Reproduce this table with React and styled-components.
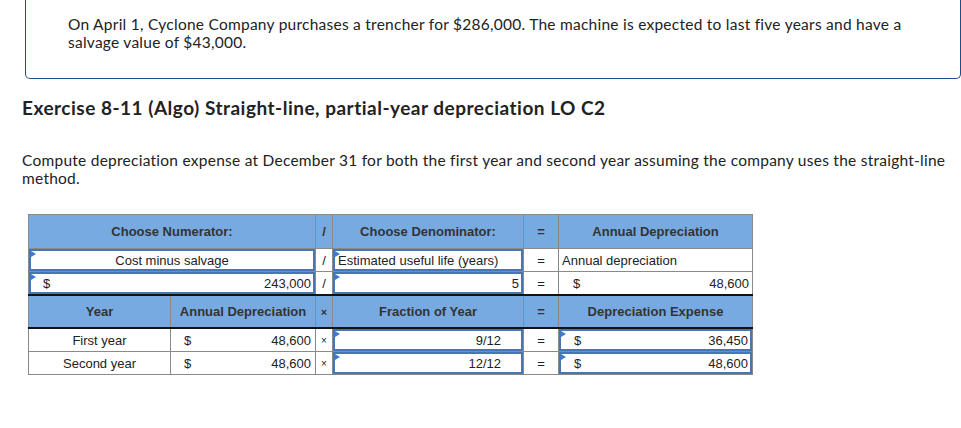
import React from "react";
import styled, { createGlobalStyle } from "styled-components";

const GlobalStyle = createGlobalStyle`
  html, body { margin: 0; padding: 0; background: #fff; overflow: hidden; }
  body { font-family: Lato, "Open Sans", sans-serif; color: #222; }
`;

const Page = styled.div`
  width: 961px;
  height: 428px;
`;

const ProblemBox = styled.div`
  box-sizing: border-box;
  margin-left: 25px;
  width: 936px;
  height: 79px;
  border: 1px solid #1f4d8c;
  border-top: none;
  border-radius: 0 0 5px 5px;
  padding: 15px 30px 0 42px;
  font-size: 15.5px;
  letter-spacing: 0.25px;
  line-height: 18px;
  color: #222;
`;

const Heading = styled.h2`
  margin: 17px 0 0 22px;
  font-size: 19px;
  letter-spacing: 0.5px;
  line-height: 24px;
  font-weight: 700;
  color: #222;
`;

const Prompt = styled.p`
  margin: 31px 0 0 22px;
  width: 930px;
  font-size: 15.5px;
  letter-spacing: 0.25px;
  line-height: 18px;
  color: #222;
`;

const Table = styled.table`
  margin: 27px 0 0 28px;
  border-collapse: collapse;
  table-layout: fixed;
  width: 724px;
  font-family: "Liberation Sans", Arial, sans-serif;
  font-size: 13px;
  color: #222;
`;

const Head = styled.td`
  height: ${(p) => (p.$dark ? "31px" : "33px")};
  padding: 0;
  background: #78aae2;
  border: 1px solid #8a8a8a;
  border-top-color: ${(p) => (p.$dark ? "#111" : "#8a8a8a")};
  border-bottom-color: ${(p) => (p.$dark ? "#111" : "#8a8a8a")};
  border-top-width: ${(p) => (p.$dark ? "2px" : "1px")};
  border-bottom-width: ${(p) => (p.$dark ? "2px" : "1px")};
  text-align: center;
  font-weight: 700;
  color: #333;
  font-size: ${(p) => (p.$small ? "11px" : "13px")};
`;

const Cell = styled.td`
  height: 22px;
  padding: 0 ${(p) => p.$pr || "4px"} 0 ${(p) => p.$pl || "4px"};
  border: 1px solid #8a8a8a;
  text-align: ${(p) => p.$align || "center"};
  white-space: nowrap;
  font-size: ${(p) => (p.$small ? "10px" : "13px")};
`;

const InputCell = styled.td`
  height: 22px;
  padding: 0;
  border: 1px solid #8a8a8a;
`;

const InputBox = styled.div`
  position: relative;
  box-sizing: border-box;
  height: 22px;
  display: flex;
  align-items: center;
  justify-content: ${(p) => p.$justify || "space-between"};
  padding: 0 ${(p) => p.$pr || "3px"} 0 ${(p) => p.$pl || "3px"};
  border: 2px solid #4676b6;
  background: #fff;
  white-space: nowrap;
  &::before {
    content: "";
    position: absolute;
    left: 0;
    top: 0;
    border-left: 5px solid #3b7bd0;
    border-top: 3px solid transparent;
    border-bottom: 3px solid transparent;
  }
`;

const Money = styled.div`
  display: flex;
  justify-content: space-between;
  padding-left: ${(p) => p.$pl || "10px"};
`;

export default function App() {
  return (
    <Page>
      <GlobalStyle />
      <ProblemBox>
        On April 1, Cyclone Company purchases a trencher for $286,000. The machine is expected to last five years and have a
        salvage value of $43,000.
      </ProblemBox>
      <Heading>Exercise 8-11 (Algo) Straight-line, partial-year depreciation LO C2</Heading>
      <Prompt>
        Compute depreciation expense at December 31 for both the first year and second year assuming the company uses the
        straight-line method.
      </Prompt>
      <Table>
        <colgroup>
          <col style={{ width: 142 }} />
          <col style={{ width: 145 }} />
          <col style={{ width: 17 }} />
          <col style={{ width: 191 }} />
          <col style={{ width: 35 }} />
          <col style={{ width: 194 }} />
        </colgroup>
        <tbody>
          <tr>
            <Head colSpan={2}>Choose Numerator:</Head>
            <Head>/</Head>
            <Head>Choose Denominator:</Head>
            <Head>=</Head>
            <Head>Annual Depreciation</Head>
          </tr>
          <tr>
            <InputCell colSpan={2}>
              <InputBox $justify="center">Cost minus salvage</InputBox>
            </InputCell>
            <Cell>/</Cell>
            <InputCell>
              <InputBox $justify="flex-start">Estimated useful life (years)</InputBox>
            </InputCell>
            <Cell>=</Cell>
            <Cell $align="left" $pl="3px">Annual depreciation</Cell>
          </tr>
          <tr>
            <InputCell colSpan={2}>
              <InputBox $pl="12px" $pr="2px">
                <span>$</span>
                <span>243,000</span>
              </InputBox>
            </InputCell>
            <Cell>/</Cell>
            <InputCell>
              <InputBox $justify="flex-end" $pr="2px">5</InputBox>
            </InputCell>
            <Cell>=</Cell>
            <Cell $align="left" $pl="0" $pr="3px">
              <Money $pl="14px">
                <span>$</span>
                <span>48,600</span>
              </Money>
            </Cell>
          </tr>
          <tr>
            <Head $dark>Year</Head>
            <Head $dark>Annual Depreciation</Head>
            <Head $dark $small>×</Head>
            <Head $dark>Fraction of Year</Head>
            <Head $dark>=</Head>
            <Head $dark>Depreciation Expense</Head>
          </tr>
          <tr>
            <Cell>First year</Cell>
            <Cell $align="left" $pl="0" $pr="4px">
              <Money $pl="13px">
                <span>$</span>
                <span>48,600</span>
              </Money>
            </Cell>
            <Cell $small>×</Cell>
            <InputCell>
              <InputBox $justify="flex-end" $pr="20px">9/12</InputBox>
            </InputCell>
            <Cell>=</Cell>
            <InputCell>
              <InputBox $pl="13px" $pr="2px">
                <span>$</span>
                <span>36,450</span>
              </InputBox>
            </InputCell>
          </tr>
          <tr>
            <Cell>Second year</Cell>
            <Cell $align="left" $pl="0" $pr="4px">
              <Money $pl="13px">
                <span>$</span>
                <span>48,600</span>
              </Money>
            </Cell>
            <Cell $small>×</Cell>
            <InputCell>
              <InputBox $justify="flex-end" $pr="20px">12/12</InputBox>
            </InputCell>
            <Cell>=</Cell>
            <InputCell>
              <InputBox $pl="13px" $pr="2px">
                <span>$</span>
                <span>48,600</span>
              </InputBox>
            </InputCell>
          </tr>
        </tbody>
      </Table>
    </Page>
  );
}
